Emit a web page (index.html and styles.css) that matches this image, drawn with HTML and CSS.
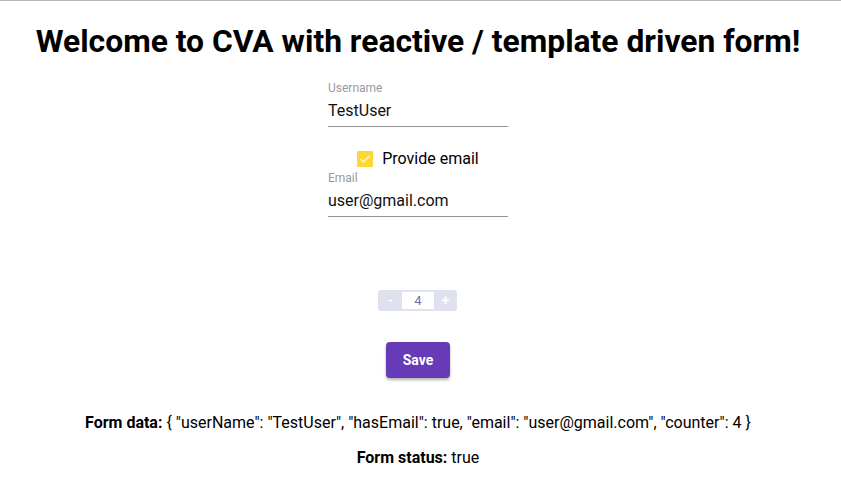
FILE: index.html
```html
<!DOCTYPE html>
<html>
<head>
<meta charset="utf-8">
<link rel="stylesheet" href="styles.css">
</head>
<body>
<div class="page">
  <h1 class="title">Welcome to CVA with reactive / template driven form!</h1>
  <form class="form">
    <div class="field">
      <label class="field-label">Username</label>
      <div class="field-value">TestUser</div>
    </div>
    <div class="check-row">
      <span class="checkbox">
        <svg width="12" height="10" viewBox="0 0 12 10"><path d="M1.5 5.2 L4.5 8 L10.5 1.8" fill="none" stroke="#fff7d8" stroke-width="1.6"/></svg>
      </span>
      <span class="check-label">Provide email</span>
    </div>
    <div class="field">
      <label class="field-label">Email</label>
      <div class="field-value">user@gmail.com</div>
    </div>
    <div class="counter">
      <span class="counter-btn">-</span>
      <span class="counter-value">4</span>
      <span class="counter-btn">+</span>
    </div>
    <button type="button" class="save">Save</button>
  </form>
  <p class="info"><b>Form data:</b> { "userName": "TestUser", "hasEmail": true, "email": "user@gmail.com", "counter": 4 }</p>
  <p class="info status"><b>Form status:</b> true</p>
</div>
</body>
</html>
```
FILE: styles.css
```css
html, body {
  margin: 0;
  padding: 0;
  background: #fff;
}
body {
  font-family: Roboto, "Liberation Sans", sans-serif;
  color: #000;
  border-top: 1px solid #b9b9b9;
}
.page {
  padding-right: 5px;
  display: flex;
  flex-direction: column;
  align-items: center;
}
.title {
  font-size: 31.8px;
  font-weight: 700;
  margin: 22px 0 0;
  line-height: 37px;
  text-align: center;
}
.form {
  display: flex;
  flex-direction: column;
  align-items: center;
  margin-top: 21px;
}
.field {
  width: 180px;
  display: flex;
  flex-direction: column;
  border-bottom: 1px solid #949494;
}
.field-label {
  font-size: 12px;
  line-height: 14px;
  color: #9a9a9a;
}
.field-value {
  font-size: 16px;
  line-height: 20px;
  margin-top: 6px;
  padding-bottom: 5px;
  color: #111;
}
.check-row {
  display: flex;
  align-items: center;
  gap: 9px;
  margin: 23px 0 3px;
  height: 18px;
}
.checkbox {
  width: 16px;
  height: 16px;
  background: #fdd835;
  border-radius: 1px;
  display: flex;
  align-items: center;
  justify-content: center;
}
.check-label {
  font-size: 16px;
  line-height: 18px;
}
.counter {
  margin-top: 73px;
  margin-right: 2px;
  display: flex;
  align-items: center;
  justify-content: space-between;
  background: #dfe1ef;
  border-radius: 3px;
  height: 21px;
  width: 79px;
  box-sizing: border-box;
  padding: 0 5px 0 7px;
}
.counter-btn {
  width: 12px;
  text-align: center;
  color: #fff;
  font-size: 15px;
  line-height: 17px;
  font-weight: 500;
}
.counter-value {
  width: 32px;
  height: 17px;
  background: #fff;
  color: #6a6fa8;
  font-size: 13px;
  line-height: 17px;
  text-align: center;
}
.save {
  margin-top: 31px;
  width: 64px;
  height: 36px;
  border: none;
  border-radius: 4px;
  background: #673ab7;
  color: #fff;
  font-family: Roboto, "Liberation Sans", sans-serif;
  font-size: 14px;
  font-weight: 700;
  box-shadow: 0 2px 3px rgba(0,0,0,0.3);
  padding: 0;
}
.info {
  font-size: 16px;
  line-height: 18px;
  margin: 36px 0 0;
  text-align: center;
}
.status {
  margin-top: 17px;
}
```
